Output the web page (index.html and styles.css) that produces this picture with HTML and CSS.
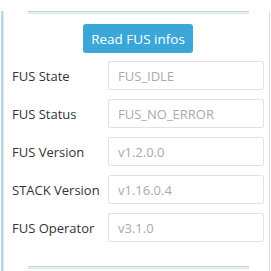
FILE: index.html
```html
<!DOCTYPE html>
<html lang="en">
<head>
  <meta charset="UTF-8">
  <title>FUS infos</title>
  <link rel="stylesheet" href="styles.css">
</head>
<body>
  <div class="panel">
    <div class="divider"></div>

    <div class="actions">
      <button class="btn-read">Read FUS infos</button>
    </div>

    <!-- FUS information rows -->
    <div class="info-list">
      <div class="info-row">
        <label>FUS State</label>
        <input type="text" placeholder="FUS_IDLE" readonly>
      </div>
      <div class="info-row">
        <label>FUS Status</label>
        <input type="text" placeholder="FUS_NO_ERROR" readonly>
      </div>
      <div class="info-row">
        <label>FUS Version</label>
        <input type="text" placeholder="v1.2.0.0" readonly>
      </div>
      <div class="info-row">
        <label>STACK Version</label>
        <input type="text" placeholder="v1.16.0.4" readonly>
      </div>
      <div class="info-row">
        <label>FUS Operator</label>
        <input type="text" placeholder="v3.1.0" readonly>
      </div>
    </div>

    <div class="divider bottom"></div>
  </div>
</body>
</html>
```

FILE: styles.css
```css
body {
  margin: 0;
  padding: 0;
  background: #fff;
  font-family: "Open Sans", Arial, sans-serif;
  font-size: 13px;
  color: #333;
  overflow: hidden;
}

/* Side panel with the blue left edge */
.panel {
  height: 271px;
  margin-left: 1px;
  width: 269px;
  box-sizing: border-box;
  border-left: 2px solid #b5dbe8;
  border-right: 1px solid #dcdcdc;
  padding-left: 1px;
  position: relative;
}

.panel::before {
  content: "";
  position: absolute;
  top: 0;
  bottom: 0;
  left: 0;
  width: 1px;
  background: #e4e4e4;
}

.divider {
  margin: 11px 20px 0 24px;
  height: 3px;
  border-top: 1px solid #bcd3da;
  border-bottom: 1px solid #dbe7eb;
  box-sizing: border-box;
  background: #eef4f6;
}

.divider.bottom {
  margin-top: 24px;
}

.actions {
  display: flex;
  justify-content: center;
  padding-top: 10px;
  padding-left: 3px;
}

.btn-read {
  width: 110px;
  height: 29px;
  border: none;
  border-radius: 3px;
  background: #3ba7d9;
  color: #fff;
  font-family: inherit;
  font-size: 13.5px;
  padding: 0;
}

.info-list {
  display: flex;
  flex-direction: column;
  gap: 9px;
  margin-top: 8px;
  padding-left: 8px;
}

.info-row {
  display: flex;
  align-items: center;
  height: 29px;
}

.info-row label {
  width: 96px;
}

.info-row input {
  width: 156px;
  height: 29px;
  box-sizing: border-box;
  border: 1px solid #e2e2e2;
  border-radius: 2px;
  padding: 0 9px;
  font-family: inherit;
  font-size: 13px;
  outline: none;
}

.info-row input::placeholder {
  color: #aaa;
}
```
